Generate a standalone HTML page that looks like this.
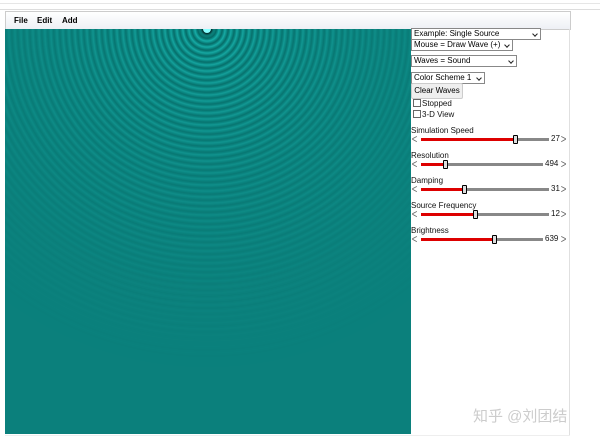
<!DOCTYPE html>
<html><head><meta charset="utf-8"><style>
body{margin:0;width:600px;height:445px;background:#fff;position:relative;overflow:hidden;font-family:"Liberation Sans",Arial,sans-serif;}
.l1{position:absolute;left:0;top:3px;width:600px;height:1px;background:#e6e6e6}
.l2{position:absolute;left:0;top:9px;width:600px;height:1px;background:#ddd}
.menu{position:absolute;left:5px;top:11px;width:564px;height:17px;background:linear-gradient(#fff,#eef0f5);border:1px solid #ccc;font-size:8px;font-weight:bold;}
.menu span{position:absolute;top:4px}
.rb{position:absolute;left:569px;top:29px;width:1px;height:406px;background:#e0e0e0}
.bb{position:absolute;left:5px;top:435px;width:565px;height:1px;background:#eee}
.cv{position:absolute;left:5px;top:29px;width:406px;height:405px;background:#0b807c;overflow:hidden}
.rings{position:absolute;left:0;top:0;width:406px;height:405px;
background:repeating-radial-gradient(circle at 202px 0px,#1ab0aa 0px,#0c8d88 1.6px,#066864 3.2px,#0c8d88 4.8px,#1ab0aa 6px);
-webkit-mask-image:radial-gradient(circle at 202px 0px,rgba(0,0,0,1) 0px,rgba(0,0,0,.6) 60px,rgba(0,0,0,.3) 150px,rgba(0,0,0,.08) 260px,rgba(0,0,0,0) 340px);
mask-image:radial-gradient(circle at 202px 0px,rgba(0,0,0,1) 0px,rgba(0,0,0,.6) 60px,rgba(0,0,0,.3) 150px,rgba(0,0,0,.08) 260px,rgba(0,0,0,0) 340px);}
.src{position:absolute;left:198px;top:-4px;width:8px;height:8px;border-radius:50%;background:#8ff;box-shadow:0 0 3px 2px #022}
.p{position:absolute;font-size:8px;color:#111;white-space:nowrap}
.sel{position:absolute;height:10px;border:1px solid #888;font-size:8px;line-height:10px;padding-left:2px;box-sizing:content-box;background:#fff;white-space:nowrap;overflow:hidden}
.sel i{position:absolute;right:3px;top:3px;width:3px;height:3px;border-right:1px solid #222;border-bottom:1px solid #222;transform:rotate(45deg);background:#fff}
.btn{position:absolute;left:411px;top:83px;width:50px;height:14px;background:#efefef;border:1px solid #ccc;border-radius:2px;font-size:8px;text-align:center;line-height:14px}
.cb{position:absolute;width:6px;height:6px;border:1px solid #666;background:#fff}
.tr{position:absolute;left:421px;width:128px;height:3px;background:#888}
.fill{position:absolute;left:0;top:0;height:3px;background:#d00}
.th{position:absolute;top:-3px;width:3px;height:7px;border:1px solid #000;background:#ddd;border-radius:1px}
.ar{position:absolute;font-size:12px;color:#666;line-height:12px;transform:scaleX(0.8)}
.wm{position:absolute;left:473px;top:405px;font-family:"Liberation Sans","Noto Sans CJK SC",sans-serif;font-size:15px;color:#ccc}
</style></head><body>
<div class="l1"></div><div class="l2"></div>
<div class="menu"><span style="left:8px">File</span><span style="left:31px">Edit</span><span style="left:56px">Add</span></div>
<div class="cv"><div class="rings"></div><div class="src"></div></div>
<div class="rb"></div><div class="bb"></div>
<div class="sel" style="left:411px;top:28px;width:126px">Example: Single Source<i></i></div>
<div class="sel" style="left:411px;top:39px;width:98px">Mouse = Draw Wave (+)<i></i></div>
<div class="sel" style="left:411px;top:55px;width:102px">Waves = Sound<i></i></div>
<div class="sel" style="left:411px;top:72px;width:70px">Color Scheme 1<i></i></div>
<div class="btn">Clear Waves</div>
<div class="cb" style="left:413px;top:99px"></div><div class="p" style="left:422px;top:99px">Stopped</div>
<div class="cb" style="left:413px;top:110px"></div><div class="p" style="left:422px;top:110px">3-D View</div>

<div class="p" style="left:411px;top:126px">Simulation Speed</div>
<div class="ar" style="left:411px;top:133px">&lt;</div>
<div class="tr" style="top:138px"><div class="fill" style="width:94px"></div><div class="th" style="left:92px"></div></div>
<div class="p" style="left:551px;top:134px">27</div><div class="ar" style="left:560px;top:133px">&gt;</div>

<div class="p" style="left:411px;top:151px">Resolution</div>
<div class="ar" style="left:411px;top:158px">&lt;</div>
<div class="tr" style="top:163px;width:122px"><div class="fill" style="width:24px"></div><div class="th" style="left:22px"></div></div>
<div class="p" style="left:545px;top:159px">494</div><div class="ar" style="left:560px;top:158px">&gt;</div>

<div class="p" style="left:411px;top:176px">Damping</div>
<div class="ar" style="left:411px;top:183px">&lt;</div>
<div class="tr" style="top:188px"><div class="fill" style="width:43px"></div><div class="th" style="left:41px"></div></div>
<div class="p" style="left:551px;top:184px">31</div><div class="ar" style="left:560px;top:183px">&gt;</div>

<div class="p" style="left:411px;top:201px">Source Frequency</div>
<div class="ar" style="left:411px;top:208px">&lt;</div>
<div class="tr" style="top:213px"><div class="fill" style="width:54px"></div><div class="th" style="left:52px"></div></div>
<div class="p" style="left:551px;top:209px">12</div><div class="ar" style="left:560px;top:208px">&gt;</div>

<div class="p" style="left:411px;top:226px">Brightness</div>
<div class="ar" style="left:411px;top:233px">&lt;</div>
<div class="tr" style="top:238px;width:122px"><div class="fill" style="width:73px"></div><div class="th" style="left:71px"></div></div>
<div class="p" style="left:545px;top:234px">639</div><div class="ar" style="left:560px;top:233px">&gt;</div>

<div class="wm">知乎 @刘团结</div>
</body></html>
